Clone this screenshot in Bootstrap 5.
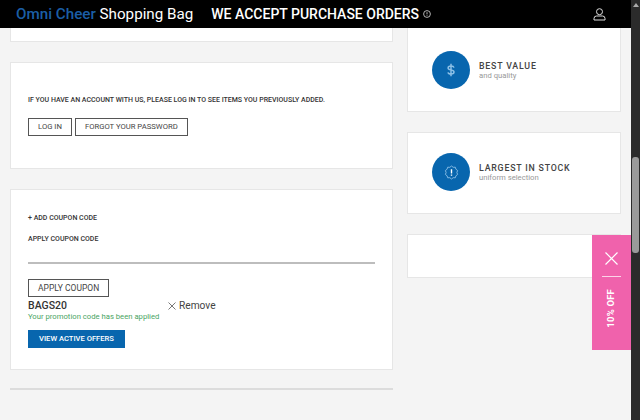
<!DOCTYPE html>
<html lang="en">
<head>
    <meta charset="UTF-8">
    <meta name="viewport" content="width=device-width, initial-scale=1.0">
    <title>Shopping Bag</title>
    <link href="https://cdn.jsdelivr.net/npm/bootstrap@5.3.0/dist/css/bootstrap.min.css" rel="stylesheet">
    <style>
        html, body { height: 100%; overflow: hidden; }
        body { background: #f4f4f4; font-family: Roboto, "Liberation Sans", sans-serif; color: #333; }
        .top-bar { width: 631px; height: 28px; background: #000; color: #fff; padding: 0 25px 0 16px; z-index: 5; }
        .brand-text { font-size: 15.2px; margin-right: 18px; white-space: nowrap; }
        .brand-blue { color: #1b5ea5; font-weight: 500; }
        .promo-text { font-size: 14px; font-weight: 500; white-space: nowrap; }
        .page-scroll { width: 631px; height: 420px; overflow: hidden; padding: 0 10px; gap: 14px; }
        .left-col { width: 383px; flex: none; }
        .right-col { width: 214px; flex: none; }
        .panel { background: #fff; border: 1px solid #e6e6e6; border-radius: 0; }
        .left-col .panel, .right-col .panel { margin-bottom: 20px; }
        .panel-first { height: 42px; }
        .panel-login { height: 107px; padding: 33px 17px 0; }
        .left-col .panel-coupon { height: 181px; padding: 24px 17px 0; margin-bottom: 18px; }
        .panel-empty { height: 30px; background: transparent; border: 0; border-top: 2px solid #dcdcdc; }
        .panel-best { height: 112px; padding: 50px 24px 0; }
        .panel-stock { height: 82px; padding: 20px 24px 0; }
        .panel-blank { height: 44px; }
        .small-caps { font-size: 7px; font-weight: 500; color: #333; line-height: 9px; white-space: nowrap; }
        .gap-login { margin-bottom: 13px; }
        .gap-add { margin-bottom: 12px; }
        .line-btn { border: 1px solid #555; background: #fff; color: #444; font-size: 7.7px; height: 18px; padding: 0 9px; border-radius: 0; line-height: 16px; }
        .line-btn-wide { font-size: 8.5px; display: block; }
        .btn-pair { gap: 3px; }
        .coupon-line { border-bottom: 2px solid #bdbdbd; height: 8px; margin: 12px 0 15px; }
        .code-row { margin-top: 3px; }
        .code-name { font-size: 10.5px; font-weight: 500; line-height: 12px; width: 140px; }
        .remove-link { font-size: 10.2px; color: #444; line-height: 12px; gap: 3px; }
        .applied-note { font-size: 7.7px; color: #4aa564; line-height: 10px; }
        .offers-btn { background: #0866ae; color: #fff; font-size: 7.6px; font-weight: 500; height: 18px; width: 97px; border: 0; border-radius: 0; padding: 0; margin-top: 8px; display: block; }
        .round-icon { width: 38px; height: 38px; border-radius: 50%; background: #0866ae; flex: none; margin-right: 9px; }
        .perk-text { padding-top: 10px; }
        .perk-title { font-size: 8.8px; font-weight: 500; letter-spacing: .8px; color: #444; line-height: 10px; }
        .perk-sub { font-size: 7.7px; color: #999; line-height: 10px; }
        .promo-tab { position: absolute; left: 592px; top: 235px; width: 39px; height: 115px; background: #f062ac; color: #fff; z-index: 4; }
        .tab-close { margin-top: 17px; }
        .tab-rule { width: 19px; border-top: 1px solid #fbd3e8; margin: 11px 0 12px; }
        .tab-label { writing-mode: vertical-rl; transform: rotate(180deg); font-size: 9.5px; font-weight: 700; letter-spacing: .2px; }
        .fake-scroll { position: absolute; right: 0; top: 0; width: 9px; height: 420px; background: #2b2b2b; z-index: 6; }
        .scroll-arrow { width: 0; height: 0; border: 3px solid transparent; border-top: 0; border-bottom: 4px solid #aaa; margin: 3px auto 0; }
        .scroll-thumb { position: absolute; left: 1px; top: 157px; width: 7px; height: 96px; background: #9a9a9a; border-radius: 3px; }
    </style>
</head>
<body>
    <header class="top-bar position-fixed top-0 start-0 d-flex align-items-center">
        <span class="brand-text"><span class="brand-blue">Omni Cheer</span> Shopping Bag</span>
        <span class="promo-text">WE ACCEPT PURCHASE ORDERS</span>
        <svg class="ms-1" width="8" height="8" viewBox="0 0 8 8" fill="none" stroke="#ddd" stroke-width=".8"><circle cx="4" cy="4" r="3.4"/><path d="M4 2.2v2.2M4 5.2v.7"/></svg>
        <svg class="ms-auto" width="13" height="13" viewBox="0 0 13 13" fill="none" stroke="#ddd" stroke-width="1"><circle cx="6.500" cy="3.700" r="3"/><path d="M1 12v-1.500a2.500 2.500 0 0 1 2.500-2.500h6a2.500 2.500 0 0 1 2.500 2.500v1.500z"/></svg>
    </header>

    <main class="page-scroll d-flex">
        <div class="left-col">
            <div class="panel panel-first"></div>
            <div class="panel panel-login">
                <p class="small-caps gap-login">IF YOU HAVE AN ACCOUNT WITH US, PLEASE LOG IN TO SEE ITEMS YOU PREVIOUSLY ADDED.</p>
                <div class="d-flex btn-pair">
                    <button class="btn line-btn" type="button">LOG IN</button>
                    <button class="btn line-btn" type="button">FORGOT YOUR PASSWORD</button>
                </div>
            </div>
            <div class="panel panel-coupon">
                <p class="small-caps gap-add">+ ADD COUPON CODE</p>
                <p class="small-caps mb-0">APPLY COUPON CODE</p>
                <div class="coupon-line"></div>
                <button class="btn line-btn line-btn-wide" type="button">APPLY COUPON</button>
                <div class="d-flex align-items-center code-row">
                    <span class="code-name">BAGS20</span>
                    <span class="remove-link d-flex align-items-center">
                        <svg width="8" height="8" viewBox="0 0 8 8" stroke="#555" stroke-width=".8"><path d="M.5.5l7 7M7.5.5l-7 7"/></svg>Remove
                    </span>
                </div>
                <div class="applied-note">Your promotion code has been applied</div>
                <button class="btn offers-btn" type="button">VIEW ACTIVE OFFERS</button>
            </div>
            <div class="panel panel-empty"></div>
        </div>

        <div class="right-col">
            <div class="panel panel-best d-flex align-items-start">
                <div class="round-icon d-flex align-items-center justify-content-center">
                    <svg width="14" height="14" viewBox="0 0 14 14" fill="none" stroke="#8cc0e6" stroke-width="1.500"><path d="M10 4.600C9.700 3.500 8.500 3 7 3 5.300 3 4.100 3.800 4.100 5 4.100 7.800 10 6.200 10 9c0 1.200-1.300 2-3 2-1.500 0-2.800-.6-3-1.700M7 .8v12.400"/></svg>
                </div>
                <div class="perk-text">
                    <div class="perk-title">BEST VALUE</div>
                    <div class="perk-sub">and quality</div>
                </div>
            </div>
            <div class="panel panel-stock d-flex align-items-start">
                <div class="round-icon d-flex align-items-center justify-content-center">
                    <svg width="15" height="15" viewBox="0 0 15 15" fill="none" stroke="#8cc0e6" stroke-width=".9"><path d="M7.500 1l1.700 1.300 2.100-.1.600 2 1.700 1.300-.7 2 .7 2-1.700 1.300-.6 2-2.100-.1L7.500 14l-1.700-1.300-2.100.1-.6-2L1.400 9.500l.7-2-.7-2 1.700-1.300.6-2 2.100.1z"/><path stroke="#fff" stroke-width="1.400" d="M7.500 4.200v4.200M7.500 9.600v1.200"/></svg>
                </div>
                <div class="perk-text">
                    <div class="perk-title">LARGEST IN STOCK</div>
                    <div class="perk-sub">uniform selection</div>
                </div>
            </div>
            <div class="panel panel-blank"></div>
        </div>
    </main>

    <aside class="promo-tab d-flex flex-column align-items-center">
        <svg class="tab-close" width="13" height="13" viewBox="0 0 13 13" stroke="#fff" stroke-width="1.200"><path d="M.5.5l12 12M12.500.5l-12 12"/></svg>
        <div class="tab-rule"></div>
        <span class="tab-label">10% OFF</span>
    </aside>

    <div class="fake-scroll">
        <div class="scroll-arrow"></div>
        <div class="scroll-thumb"></div>
    </div>

    <script src="https://cdn.jsdelivr.net/npm/bootstrap@5.3.0/dist/js/bootstrap.bundle.min.js"></script>
</body>
</html>
